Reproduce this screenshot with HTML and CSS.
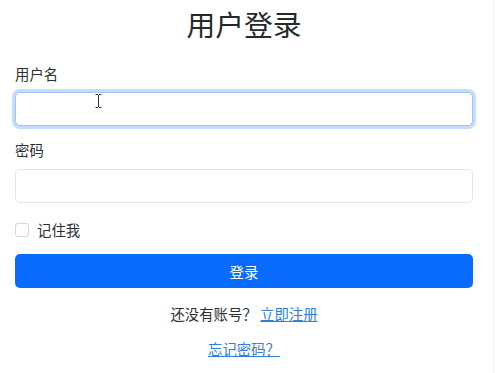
FILE: index.html
```html
<!DOCTYPE html>
<html lang="zh-CN">
<head>
  <meta charset="UTF-8" />
  <meta name="viewport" content="width=device-width, initial-scale=1.0"/>
  <title>用户登录</title>
  <link rel="stylesheet" href="styles.css">
</head>
<body>
  <div class="page">
    <div class="login">
      <h2>用户登录</h2>

      <div class="form-group">
        <label for="username">用户名</label>
        <div class="field">
          <input type="text" id="username" class="form-control focused" />
          <!-- mouse cursor seen over the field -->
          <svg class="ibeam" width="7" height="14" viewBox="0 0 7 14">
            <path d="M0.5 0.5h2.5M4 0.5h2.5M3.5 1v12M0.5 13.5h2.5M4 13.5h2.5" stroke="#333" stroke-width="1" fill="none"/>
          </svg>
        </div>
      </div>

      <div class="form-group">
        <label for="password">密码</label>
        <input type="password" id="password" class="form-control" />
      </div>

      <div class="check-row">
        <input type="checkbox" id="remember" />
        <label for="remember">记住我</label>
      </div>

      <button class="btn-login">登录</button>

      <p class="register">还没有账号？ <a href="#">立即注册</a></p>
      <p class="forgot"><a href="#">忘记密码？</a></p>
    </div>
  </div>
</body>
</html>
```

FILE: styles.css
```css
body {
  margin: 0;
  font-family: "Noto Sans CJK SC", "Noto Sans", sans-serif;
  font-size: 14.4px;
  line-height: 1.5;
  color: #2b2f33;
  background: #fff;
}

.page {
  width: 493px;
  min-height: 373px;
  border-right: 1px solid #eef0f2;
}

.login {
  width: 458px;
  margin-left: 15px;
  padding-top: 7px;
}

h2 {
  margin: 0 0 21px;
  font-size: 28.8px;
  font-weight: 400;
  line-height: 1.2;
  text-align: center;
  color: #26292c;
}

.form-group {
  margin-bottom: 13px;
}

.form-group label {
  display: block;
  margin-bottom: 8px;
}

.field {
  position: relative;
}

.form-control {
  display: block;
  width: 100%;
  height: 34px;
  box-sizing: border-box;
  padding: 5px 11px;
  font: inherit;
  border: 1px solid #e3e5e8;
  border-radius: 5px;
  background: #fff;
  outline: none;
}

.form-control.focused {
  border-color: #9cc3fb;
  box-shadow: 0 0 0 3px #c4dcfd;
}

.ibeam {
  position: absolute;
  left: 80px;
  top: 2px;
}

.check-row {
  display: flex;
  align-items: center;
  gap: 8px;
  margin-top: 16px;
  margin-bottom: 14px;
}

.check-row input {
  width: 14px;
  height: 14px;
  margin: 0;
  appearance: none;
  border: 1px solid #d3d6da;
  border-radius: 3px;
  background: #fff;
}

.btn-login {
  display: block;
  width: 100%;
  height: 34px;
  border: none;
  border-radius: 5px;
  background-color: #0a6cff;
  color: #fff;
  font: inherit;
  cursor: pointer;
}

.register {
  margin: 15px 0 0;
  text-align: center;
}

.forgot {
  margin: 13px 0 0;
  text-align: center;
}

a {
  color: #2f7de1;
  text-decoration: underline;
}
```
